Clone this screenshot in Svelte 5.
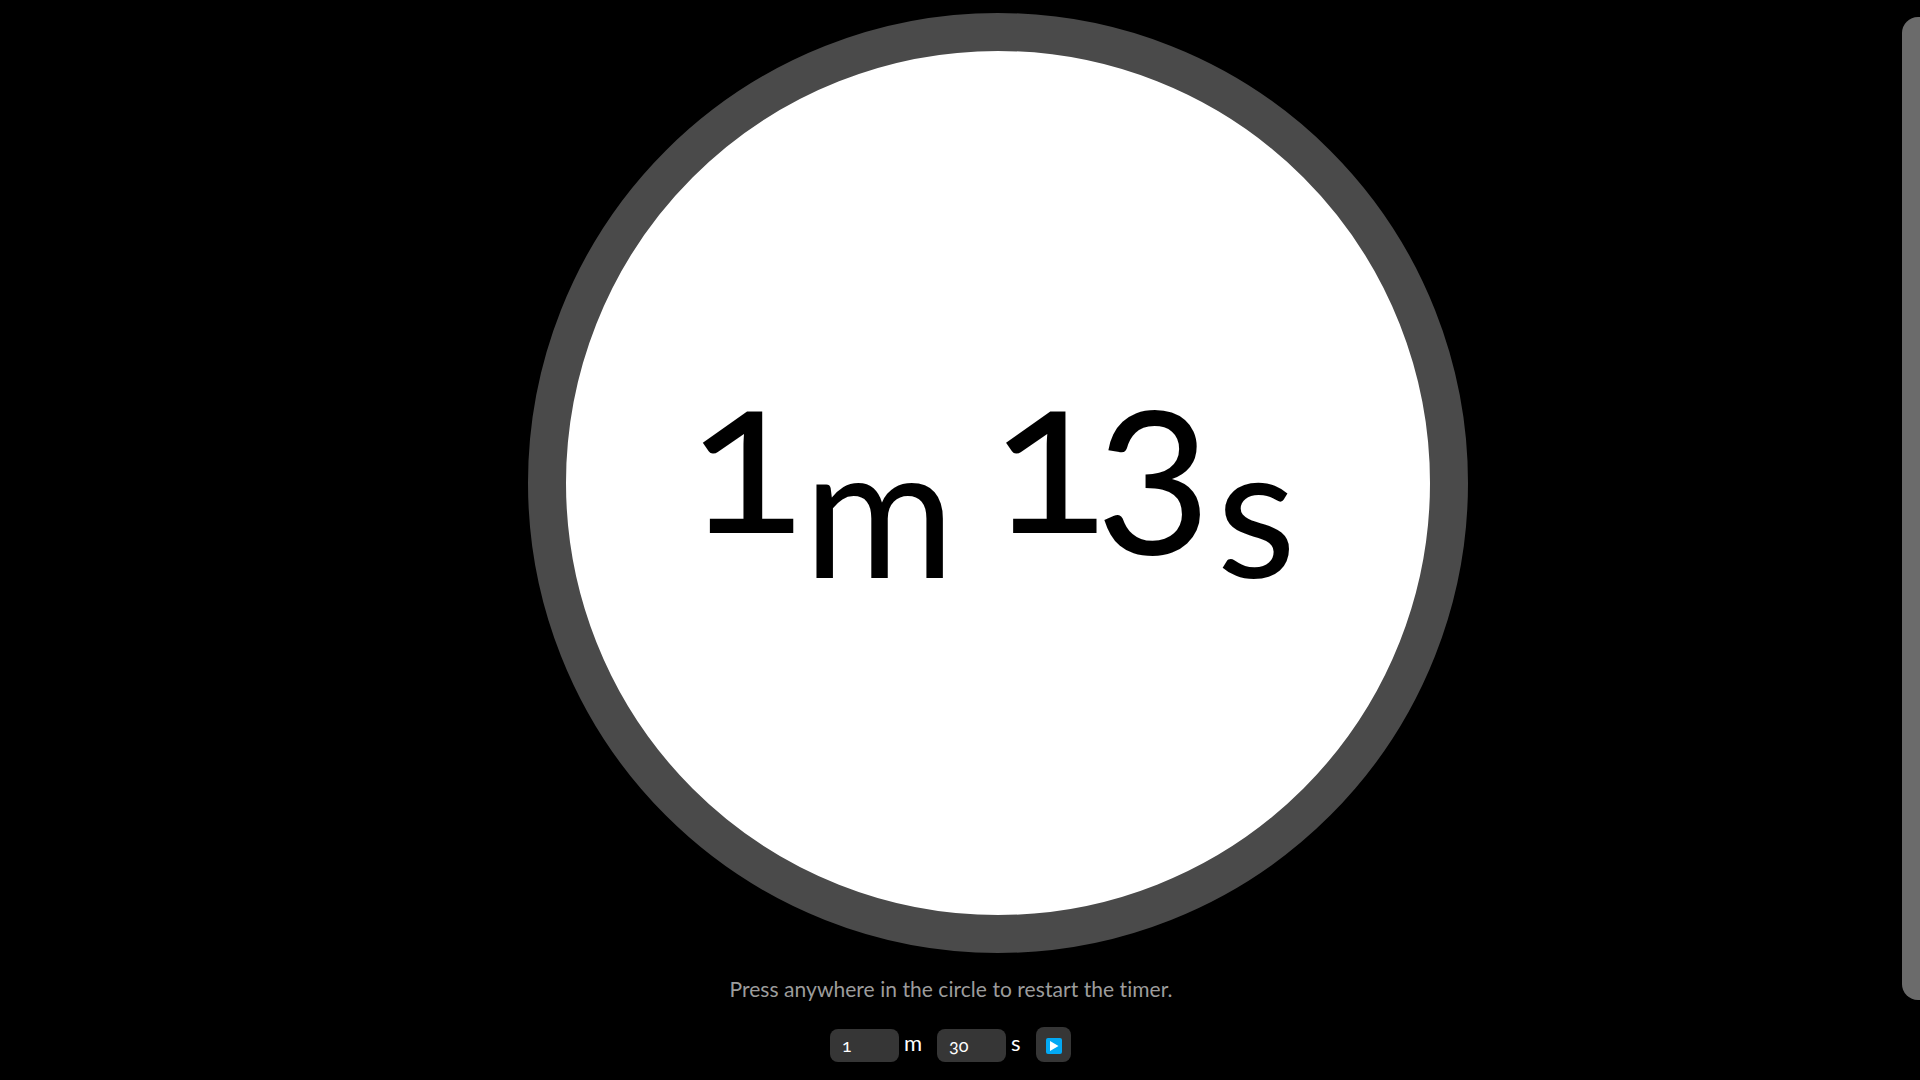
<script>
	let minutes = $state(1);
	let seconds = $state(30);
	let left = $state(73);

	let leftM = $derived(Math.floor(left / 60));
	let leftS = $derived(left % 60);
</script>

<main class="page">
	<button class="ring" aria-label="Restart timer">
		<span class="time">
			<span class="num">{leftM}</span><span class="unit">m</span>
			<span class="num second">{leftS}</span><span class="unit">s</span>
		</span>
	</button>

	<p class="hint">Press anywhere in the circle to restart the timer.</p>

	<div class="controls">
		<input class="field" type="text" bind:value={minutes} />
		<span class="label m">m</span>
		<input class="field" type="text" bind:value={seconds} />
		<span class="label s">s</span>
		<button class="play" aria-label="Start">
			<svg width="16" height="16" viewBox="0 0 16 16">
				<rect width="16" height="16" rx="2" fill="#03a9f4" />
				<path d="M4 3 L12.5 8 L4 13 Z" fill="#fff" />
			</svg>
		</button>
	</div>
</main>

<div class="thumb"></div>

<style>
	:global(body) {
		margin: 0;
		background: #000;
		overflow: hidden;
	}

	.page {
		width: 1902px;
		height: 1080px;
		display: flex;
		flex-direction: column;
		align-items: center;
		font-family: Lato, "Open Sans", sans-serif;
		font-variant-numeric: oldstyle-nums;
	}

	.ring {
		box-sizing: border-box;
		width: 940px;
		height: 940px;
		flex: none;
		margin: 13px 0 0 94px;
		padding: 0;
		border: 38px solid #4a4a4a;
		border-radius: 50%;
		background: #fff;
		color: #000;
		font: inherit;
		display: flex;
		align-items: center;
		justify-content: center;
	}

	.time {
		display: block;
		white-space: nowrap;
		line-height: 1;
		font-weight: 400;
		margin-top: -27px;
		margin-left: -12px;
	}

	.num {
		font-size: 218px;
		letter-spacing: -14px;
		vertical-align: 45px;
	}

	.second {
		margin-left: 32px;
	}

	.unit {
		font-size: 184px;
		margin-left: 12px;
	}

	.unit:last-child {
		margin-left: 18px;
	}

	.hint {
		margin: 24px 0 0;
		font-size: 21px;
		letter-spacing: 0.05px;
		line-height: 24px;
		color: #9c9c9c;
	}

	.controls {
		display: flex;
		align-items: flex-end;
		margin: 26px 0 0 -1px;
	}

	.field {
		box-sizing: border-box;
		width: 69px;
		height: 33px;
		padding: 0 12px 2px;
		border: 0;
		border-radius: 8px;
		background: #363636;
		color: #fff;
		font: inherit;
		font-size: 18px;
		font-variant-numeric: oldstyle-nums;
		outline: none;
	}

	.label {
		box-sizing: border-box;
		color: #fff;
		font-size: 22px;
		line-height: 27px;
		height: 33px;
		padding-left: 5px;
	}

	.label.m {
		width: 38px;
	}

	.label.s {
		width: 30px;
	}

	.play {
		width: 35px;
		height: 35px;
		padding: 3px 0 0;
		border: 0;
		border-radius: 8px;
		background: #363636;
		display: flex;
		align-items: center;
		justify-content: center;
	}

	.thumb {
		position: fixed;
		top: 17px;
		right: 0;
		width: 18px;
		height: 983px;
		background: #6b6b6b;
		border-radius: 16px 0 0 16px;
	}
</style>
